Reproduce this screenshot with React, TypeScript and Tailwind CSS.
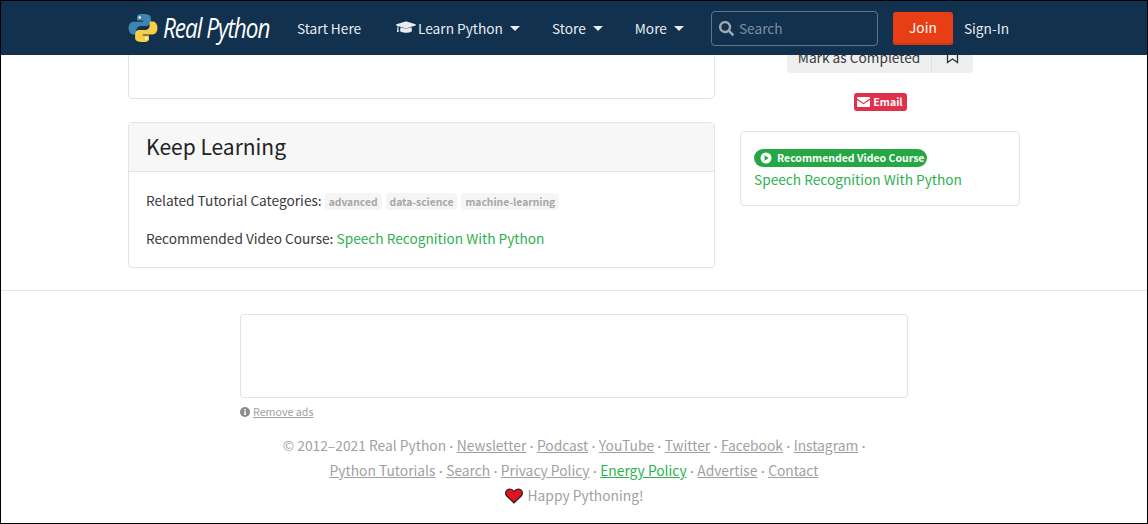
const font = "font-['Noto_Sans_CJK_SC','Source_Sans_Pro',sans-serif]";

function PythonLogo() {
  return (
    <svg width="30" height="30" viewBox="0 0 32 32" className="shrink-0">
      <path fill="#3f83b0" d="M15.6 1c-6 0-6 2.400-6 3.600V8h6.600v1.200H6C2.800 9.200.6 11.800.6 16c0 4.400 2.200 7 5.200 7h3V19c0-2.800 2.200-5.200 5.200-5.200h6.200c2.400 0 4.200-2 4.200-4.200V5c0-2.400-2.600-4-8.800-4z" />
      <path fill="#f6cf45" d="M16.400 31c6 0 6-2.400 6-3.600V24h-6.600v-1.200H26c3.200 0 5.400-2.600 5.400-6.800 0-4.400-2.200-7-5.200-7h-3v4c0 2.800-2.200 5.200-5.200 5.200h-6.200c-2.400 0-4.200 2-4.200 4.200v4.600c0 2.400 2.600 4 8.800 4z" />
      <circle cx="12.500" cy="4.800" r="1.300" fill="#fff" />
      <circle cx="19.500" cy="27.200" r="1.300" fill="#fff" />
    </svg>
  );
}

function Caret() {
  return <span className="ml-[7px] inline-block border-x-[5px] border-t-[5px] border-x-transparent border-t-current align-middle" />;
}

function Tag({ children }: { children: string }) {
  return <span className="rounded bg-[#f5f5f5] px-[4px] py-[1px] text-[10.300px] leading-[15px] font-bold text-[#a6a6a6]">{children}</span>;
}

function FooterLink({ children, green }: { children: string; green?: boolean }) {
  return <a className={green ? "text-[#2db14f] underline" : "underline"}>{children}</a>;
}

function Dot() {
  return <span className="font-['Lato',sans-serif]"> · </span>;
}

export default function App() {
  return (
    <div className={`${font} h-[524px] w-[1148px] overflow-hidden border border-black bg-white text-[13.700px] leading-[24px] text-[#3a3a3a]`}>
      <nav className="relative z-10 flex h-[54px] items-center bg-[#12314e] pl-[127px] text-[#e9edf0]">
        <PythonLogo />
        <span className="ml-[5px] w-[108px] origin-left scale-y-125 font-['Open_Sans',sans-serif] text-[22.500px] leading-[30px] font-normal tracking-[-1px] whitespace-nowrap text-white italic">Real Python</span>
        <span className="ml-[26px] w-[64px] whitespace-nowrap">Start Here</span>
        <span className="ml-[35px] flex items-center">
          <svg width="20" height="16" viewBox="0 0 640 512" fill="currentColor" className="mr-[2px]">
            <path d="M623 136.900 340 49.900c-13-4-27-4-40 0L17 136.900c-23 7-23 37 0 44l49 15c-11 14-18 31-19 50-6 3-10 10-10 17 0 7 3 12 8 16L30 364c-2 8 3 16 11 16h38c8 0 13-8 11-16L75 278c5-4 9-9 9-16 0-7-4-13-10-17 1-18 10-33 23-42l203 62c9 3 27 7 40 0l283-87c23-7 23-37 0-42zM351 274c-28 9-52 4-62 0l-145-44-14 114c0 35 85 64 190 64s190-29 190-64l-14-114z" />
          </svg>
          Learn Python
          <Caret />
        </span>
        <span className="ml-[32px] flex items-center">Store<Caret /></span>
        <span className="ml-[32px] flex items-center">More<Caret /></span>
        <div className="ml-[27px] flex h-[35px] w-[167px] items-center rounded border border-[#5f7688] px-[7px] text-[#7f8f9d]">
          <svg width="15" height="15" viewBox="0 0 512 512" fill="currentColor" className="mr-[5px] text-[#a0a9b0]">
            <path d="M505 442.700 405.300 343c-4.500-4.500-10.600-7-17-7H372c27.600-35.300 44-79.700 44-128C416 93.100 322.900 0 208 0S0 93.100 0 208s93.100 208 208 208c48.300 0 92.700-16.400 128-44v16.300c0 6.400 2.500 12.500 7 17l99.700 99.700c9.400 9.400 24.600 9.400 33.900 0l28.300-28.300c9.400-9.400 9.400-24.600.1-34zM208 336c-70.700 0-128-57.200-128-128 0-70.700 57.200-128 128-128 70.700 0 128 57.200 128 128 0 70.700-57.200 128-128 128z" />
          </svg>
          Search
        </div>
        <span className="ml-[15px] flex h-[33px] w-[60px] items-center justify-center rounded-[3px] border-b-2 border-b-[#cf3a12] bg-[#e83e16] text-white">Join</span>
        <span className="ml-[11px]">Sign-In</span>
      </nav>

      <div className="flex h-[236px] overflow-hidden border-b border-[#e6e6e6] pl-[127px]">
        <main className="flex w-[587px] flex-col">
          <div className="-mt-[59px] h-[103px] shrink-0 rounded border border-[#e3e3e3]" />
          <section className="mt-[23px] rounded border border-[#e3e3e3]">
            <h2 className="h-[49px] border-b border-[#e3e3e3] bg-[#f7f7f7] px-[17px] text-[21px] leading-[47px] text-[#222]">Keep Learning</h2>
            <div className="px-[17px] pt-[16px] pb-[17px]">
              <div className="flex h-[24px] items-center">
                Related Tutorial Categories:
                <div className="mt-[2px] ml-[3px] flex gap-[4px]">
                  <Tag>advanced</Tag>
                  <Tag>data-science</Tag>
                  <Tag>machine-learning</Tag>
                </div>
              </div>
              <p className="mt-[14px]">Recommended Video Course: <a className="text-[#2db14f]">Speech Recognition With Python</a></p>
            </div>
          </section>
        </main>

        <aside className="ml-[25px] flex w-[280px] flex-col items-center">
          <div className="-mt-[15px] flex h-[33px] w-[186px] shrink-0 rounded bg-[#efefef]">
            <span className="flex w-[145px] items-center justify-center border-r border-[#e0e0e0]">Mark as Completed</span>
            <span className="flex flex-1 items-center justify-center">
              <svg width="13" height="15" viewBox="0 0 13 15" fill="none" stroke="#333" strokeWidth="1.300"><path d="M1.500 1h10v12.500l-5-3.500-5 3.500z" /></svg>
            </span>
          </div>
          <span className="mt-[20px] flex h-[18px] w-[53px] shrink-0 items-center justify-center gap-[3px] rounded-[3px] bg-[#e0314a] text-[10.500px] leading-[16px] font-bold text-white">
            <svg width="13" height="10" viewBox="0 0 13 10" fill="currentColor"><path d="M1 0h11a1 1 0 0 1 1 1v.6L6.500 6 0 1.600V1a1 1 0 0 1 1-1zM0 3l6.500 4.300L13 3v6a1 1 0 0 1-1 1H1a1 1 0 0 1-1-1z" /></svg>
            Email
          </span>
          <div className="mt-[20px] h-[75px] w-full shrink-0 rounded border border-[#e6e6e6] px-[13px] pt-[17px]">
            <span className="flex h-[18px] w-[173px] items-center rounded-full bg-[#25a744] pl-[6px] text-[10.500px] leading-[16px] font-bold whitespace-nowrap text-white">
              <svg width="12" height="12" viewBox="0 0 12 12" className="mr-[5px]"><circle cx="6" cy="6" r="5.500" fill="#fff" /><path d="M4.500 3.300 8.700 6l-4.200 2.700z" fill="#25a744" /></svg>
              Recommended Video Course
            </span>
            <a className="block leading-[25px] text-[#2db14f]">Speech Recognition With Python</a>
          </div>
        </aside>
      </div>

      <footer className="flex flex-col items-center pt-[23px] text-[13.800px] text-[#9f9f9f]">
        <div className="h-[84px] w-[668px] rounded border border-[#e3e3e3]" />
        <div className="mt-[6px] flex w-[668px] items-center text-[10.700px] leading-[16px]">
          <svg width="10" height="10" viewBox="0 0 10 10" className="mr-[3px]"><circle cx="5" cy="5" r="5" fill="#8c8c8c" /><rect x="4.200" y="4.200" width="1.600" height="3.800" fill="#fff" /><rect x="4.200" y="2" width="1.600" height="1.500" fill="#fff" /></svg>
          <a className="underline">Remove ads</a>
        </div>
        <p className="mt-[13px] leading-[25px] whitespace-nowrap">© 2012–2021 Real Python<Dot /><FooterLink>Newsletter</FooterLink><Dot /><FooterLink>Podcast</FooterLink><Dot /><FooterLink>YouTube</FooterLink><Dot /><FooterLink>Twitter</FooterLink><Dot /><FooterLink>Facebook</FooterLink><Dot /><FooterLink>Instagram</FooterLink><Dot /></p>
        <p className="leading-[25px] whitespace-nowrap"><FooterLink>Python Tutorials</FooterLink><Dot /><FooterLink>Search</FooterLink><Dot /><FooterLink>Privacy Policy</FooterLink><Dot /><FooterLink green>Energy Policy</FooterLink><Dot /><FooterLink>Advertise</FooterLink><Dot /><FooterLink>Contact</FooterLink></p>
        <p className="flex items-center leading-[25px]">
          <svg width="18" height="16" viewBox="0 0 18 16" className="mr-[5px]"><path d="M9 15 1.800 8C-.6 5.500 1 1 4.800 1 6.800 1 8 2 9 3.500 10 2 11.200 1 13.200 1 17 1 18.600 5.500 16.200 8z" fill="#e0141c" stroke="#222" strokeWidth="1.200" /></svg>
          Happy Pythoning!
        </p>
      </footer>
    </div>
  );
}
